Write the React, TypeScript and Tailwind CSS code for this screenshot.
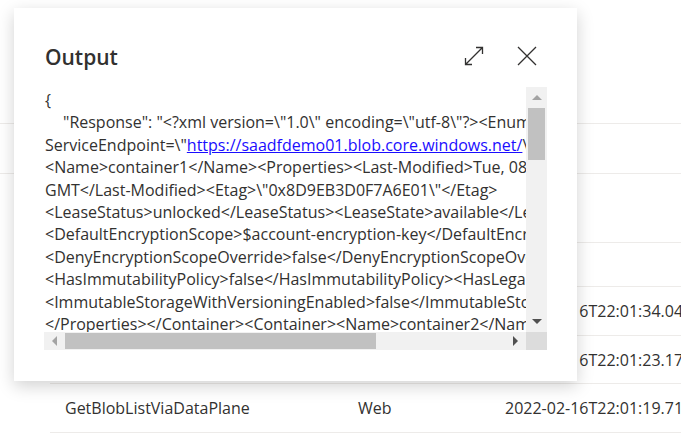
import React from 'react';

const lines: React.ReactNode[] = [
  '{',
  <span className="pl-[18px]">"Response": "&lt;?xml version=\"1.0\" encoding=\"utf-8\"?&gt;&lt;EnumerationResults</span>,
  <>
    ServiceEndpoint=\"
    <a href="#" className="text-[#1a0dff] underline">
      https://saadfdemo01.blob.core.windows.net/
    </a>
    \"&gt;&lt;Containers&gt;&lt;Container&gt;
  </>,
  '<Name>container1</Name><Properties><Last-Modified>Tue, 08 Feb 2022 21:47:11',
  'GMT</Last-Modified><Etag>\\"0x8D9EB3D0F7A6E01\\"</Etag>',
  '<LeaseStatus>unlocked</LeaseStatus><LeaseState>available</LeaseState>',
  '<DefaultEncryptionScope>$account-encryption-key</DefaultEncryptionScope>',
  '<DenyEncryptionScopeOverride>false</DenyEncryptionScopeOverride>',
  '<HasImmutabilityPolicy>false</HasImmutabilityPolicy><HasLegalHold>false</HasLegalHold>',
  '<ImmutableStorageWithVersioningEnabled>false</ImmutableStorageWithVersioningEnabled>',
  '</Properties></Container><Container><Name>container2</Name><Properties>',
];

const rows = [
  { h: 'h-[44px]', name: '', type: '', time: '' },
  { h: 'h-[49px]', name: '', type: '', time: '2022-02-16T22:01:34.044' },
  { h: 'h-[48px]', name: '', type: '', time: '2022-02-16T22:01:23.175' },
  { h: 'h-[49px]', name: 'GetBlobListViaDataPlane', type: 'Web', time: '2022-02-16T22:01:19.713' },
];

const App: React.FC = () => {
  return (
    <div className="relative w-[681px] h-[433px] overflow-hidden bg-white font-['Open_Sans',sans-serif] text-[#323130]">
      {/* Page behind the dialog */}
      <div className="h-[124px] border-b border-[#edebe9]" />
      <div className="h-[50px] border-b border-[#edebe9]" />
      <div className="ml-[50px]">
        <div className="h-[69px] border-b border-[#edebe9]" />
        {rows.map((r, i) => (
          <div key={i} className={`${r.h} flex items-center border-b border-[#edebe9] text-[16px] whitespace-nowrap`}>
            <div className="w-[308px] shrink-0 pl-[15px]">{r.name}</div>
            <div className="w-[147px] shrink-0">{r.type}</div>
            <div className="shrink-0">{r.time}</div>
          </div>
        ))}
      </div>

      {/* Output dialog */}
      <div className="absolute left-[14px] top-[8px] w-[563px] h-[373px] bg-white shadow-[0_5px_16px_rgba(0,0,0,0.18)] flex flex-col">
        <div className="mt-[30px] h-[40px] flex items-center justify-between pl-[31px] pr-[40px]">
          <h2 className="text-[21px] font-semibold">Output</h2>
          <div className="flex items-center gap-[33px] -mt-[4px]">
            <svg width="20" height="20" viewBox="0 0 20 20" fill="none" stroke="#323130" strokeWidth="1.3">
              <path d="M1.5 18.5 L18.5 1.5 M12 1.5 H18.5 V8 M1.5 12 V18.5 H8" />
            </svg>
            <svg width="20" height="20" viewBox="0 0 20 20" fill="none" stroke="#323130" strokeWidth="1.3">
              <path d="M1 1 L19 19 M19 1 L1 19" />
            </svg>
          </div>
        </div>

        <div className="mt-[9px] mx-[30px] h-[263px] flex flex-col">
          <div className="flex h-[245px]">
            <div className="w-[482px] overflow-hidden pt-[2px] pl-[1px] text-[16px] leading-[22.4px] whitespace-pre">
              {lines.map((l, i) => (
                <div key={i}>{l}</div>
              ))}
            </div>
            {/* vertical scrollbar */}
            <div className="w-[21px] bg-[#f1f1f1] flex flex-col items-center">
              <div className="h-[21px] flex items-center justify-center">
                <div className="w-0 h-0 border-l-[5px] border-r-[5px] border-b-[5px] border-l-transparent border-r-transparent border-b-[#a3a3a3]" />
              </div>
              <div className="w-[17px] h-[52px] bg-[#c1c1c1]" />
              <div className="flex-1" />
              <div className="h-[21px] flex items-center justify-center">
                <div className="w-0 h-0 border-l-[5px] border-r-[5px] border-t-[5px] border-l-transparent border-r-transparent border-t-[#505050]" />
              </div>
            </div>
          </div>
          {/* horizontal scrollbar */}
          <div className="flex h-[18px]">
            <div className="w-[482px] bg-[#f1f1f1] flex items-center">
              <div className="w-[21px] flex items-center justify-center">
                <div className="w-0 h-0 border-t-[5px] border-b-[5px] border-r-[5px] border-t-transparent border-b-transparent border-r-[#a3a3a3]" />
              </div>
              <div className="w-[311px] h-[16px] bg-[#c1c1c1]" />
              <div className="flex-1" />
              <div className="w-[21px] flex items-center justify-center">
                <div className="w-0 h-0 border-t-[5px] border-b-[5px] border-l-[5px] border-t-transparent border-b-transparent border-l-[#505050]" />
              </div>
            </div>
            <div className="w-[21px] bg-[#dcdcdc]" />
          </div>
        </div>
      </div>
    </div>
  );
};

export default App;
